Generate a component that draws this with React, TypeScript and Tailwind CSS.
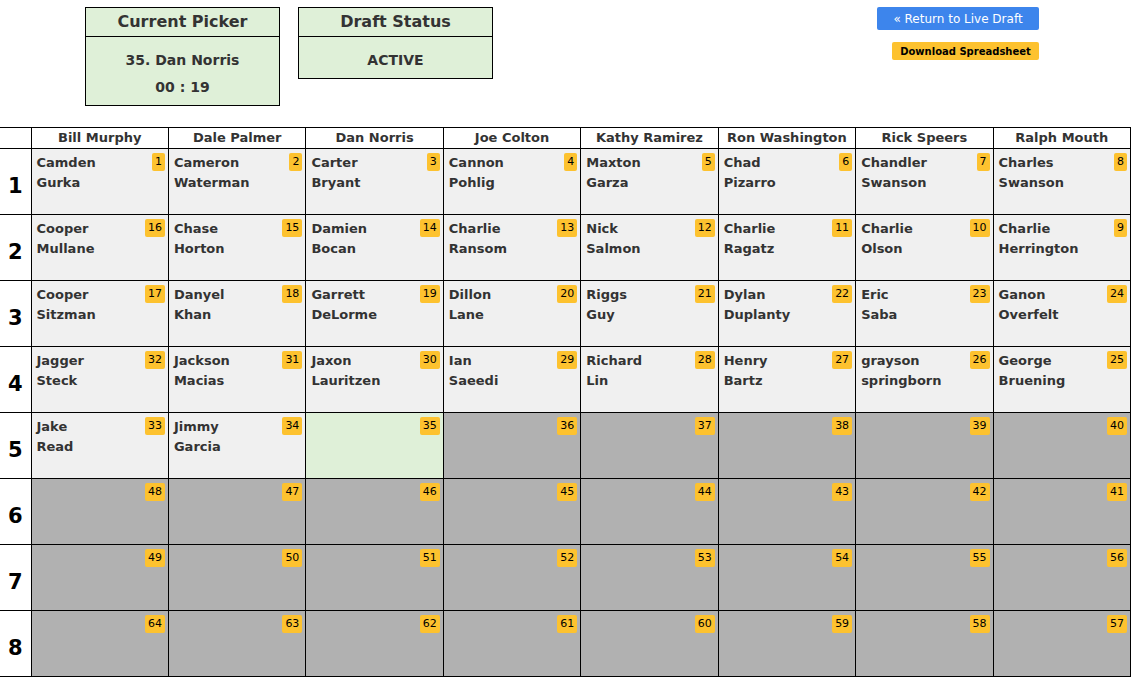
const managers = [
  "Bill Murphy",
  "Dale Palmer",
  "Dan Norris",
  "Joe Colton",
  "Kathy Ramirez",
  "Ron Washington",
  "Rick Speers",
  "Ralph Mouth",
];

// picks keyed by overall pick number
const picks: Record<number, [string, string]> = {
  1: ["Camden", "Gurka"],
  2: ["Cameron", "Waterman"],
  3: ["Carter", "Bryant"],
  4: ["Cannon", "Pohlig"],
  5: ["Maxton", "Garza"],
  6: ["Chad", "Pizarro"],
  7: ["Chandler", "Swanson"],
  8: ["Charles", "Swanson"],
  9: ["Charlie", "Herrington"],
  10: ["Charlie", "Olson"],
  11: ["Charlie", "Ragatz"],
  12: ["Nick", "Salmon"],
  13: ["Charlie", "Ransom"],
  14: ["Damien", "Bocan"],
  15: ["Chase", "Horton"],
  16: ["Cooper", "Mullane"],
  17: ["Cooper", "Sitzman"],
  18: ["Danyel", "Khan"],
  19: ["Garrett", "DeLorme"],
  20: ["Dillon", "Lane"],
  21: ["Riggs", "Guy"],
  22: ["Dylan", "Duplanty"],
  23: ["Eric", "Saba"],
  24: ["Ganon", "Overfelt"],
  25: ["George", "Bruening"],
  26: ["grayson", "springborn"],
  27: ["Henry", "Bartz"],
  28: ["Richard", "Lin"],
  29: ["Ian", "Saeedi"],
  30: ["Jaxon", "Lauritzen"],
  31: ["Jackson", "Macias"],
  32: ["Jagger", "Steck"],
  33: ["Jake", "Read"],
  34: ["Jimmy", "Garcia"],
};

const CURRENT = 35;
const rounds = [1, 2, 3, 4, 5, 6, 7, 8];

function pickNo(round: number, col: number) {
  return round % 2 === 1 ? (round - 1) * 8 + col + 1 : round * 8 - col;
}

function PickCell({ n }: { n: number }) {
  const p = picks[n];
  const bg = p ? "bg-[#f0f0f0]" : n === CURRENT ? "bg-[#dff0d8]" : "bg-[#b1b1b1]";
  return (
    <td className={`relative h-[66px] border border-black align-top ${bg}`}>
      {p && (
        <div className="pl-[5px] pt-[4px] text-[13px] font-bold leading-[20px] text-[#333]">
          <div>{p[0]}</div>
          <div>{p[1]}</div>
        </div>
      )}
      <span className="absolute right-[3px] top-[4px] rounded-[2px] bg-[#fdc22f] px-[3px] text-[11px] leading-[18px] text-black">
        {n}
      </span>
    </td>
  );
}

export default function App() {
  return (
    <div className="min-h-[681px] bg-white font-['DejaVu_Sans',sans-serif] text-[#333]">
      <div className="flex items-start pt-[7px]">
        <div className="ml-[85px] w-[195px] border border-black bg-[#dff0d8] text-center">
          <div className="h-[29px] border-b border-black text-[16px] font-bold leading-[28px]">
            Current Picker
          </div>
          <div className="pt-[10px] text-[14px] font-bold leading-[27px]">35. Dan Norris</div>
          <div className="pb-[4px] text-[14px] font-bold leading-[27px]">00 : 19</div>
        </div>
        <div className="ml-[18px] h-[72px] w-[195px] border border-black bg-[#dff0d8] text-center">
          <div className="h-[29px] border-b border-black text-[16px] font-bold leading-[28px]">
            Draft Status
          </div>
          <div className="pt-[16px] text-[14px] font-bold leading-[15px]">ACTIVE</div>
        </div>
        <div className="ml-auto mr-[93px] flex flex-col items-end">
          <button className="h-[23px] w-[162px] rounded-[2px] bg-[#3d85ec] text-[12px] text-white">
            « Return to Live Draft
          </button>
          <button className="mt-[12px] h-[18px] w-[147px] rounded-[2px] bg-[#fdc22f] text-[10px] font-bold text-black">
            Download Spreadsheet
          </button>
        </div>
      </div>

      <table className="mt-[21px] w-[1131px] table-fixed border-collapse">
        <colgroup>
          <col className="w-[31px]" />
          {managers.map((m) => (
            <col key={m} />
          ))}
        </colgroup>
        <thead>
          <tr>
            <th className="h-[21px] border-y border-r border-black" />
            {managers.map((m) => (
              <th
                key={m}
                className="h-[21px] border border-black text-center text-[13px] font-bold leading-[18px] text-[#333]"
              >
                {m}
              </th>
            ))}
          </tr>
        </thead>
        <tbody>
          {rounds.map((r) => (
            <tr key={r}>
              <td className="border-y border-r border-black pt-[10px] text-center text-[21px] font-bold text-black">
                {r}
              </td>
              {managers.map((m, c) => (
                <PickCell key={m} n={pickNo(r, c)} />
              ))}
            </tr>
          ))}
        </tbody>
      </table>
    </div>
  );
}
